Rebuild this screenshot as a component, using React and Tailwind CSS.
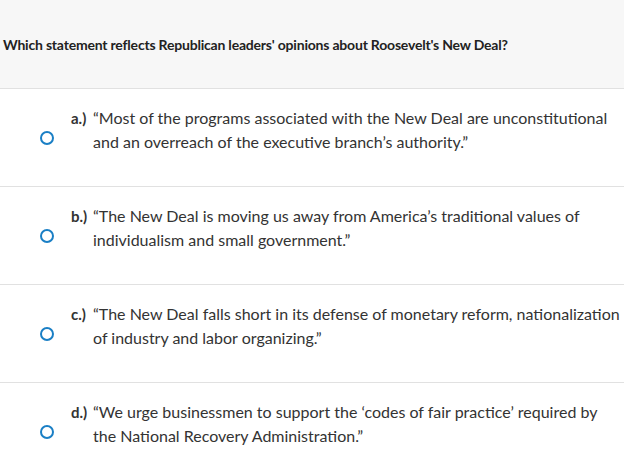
export default function App() {
  const options = [
    {
      label: "a.)",
      text: "“Most of the programs associated with the New Deal are unconstitutional and an overreach of the executive branch’s authority.”",
    },
    {
      label: "b.)",
      text: "“The New Deal is moving us away from America’s traditional values of individualism and small government.”",
    },
    {
      label: "c.)",
      text: "“The New Deal falls short in its defense of monetary reform, nationalization of industry and labor organizing.”",
    },
    {
      label: "d.)",
      text: "“We urge businessmen to support the ‘codes of fair practice’ required by the National Recovery Administration.”",
    },
  ];

  return (
    <div className="w-[624px] h-[473px] overflow-hidden bg-white font-['Lato',sans-serif] text-[#333]">
      <div className="h-[89px] bg-[#f7f7f7] border-b border-[#e1e1e1] flex items-center pl-[3px]">
        <h1 className="text-[14px] tracking-[-0.2px] font-bold text-[#222]">
          Which statement reflects Republican leaders' opinions about Roosevelt's New Deal?
        </h1>
      </div>

      {options.map((opt) => (
        <div
          key={opt.label}
          className="h-[98px] border-b border-[#e1e1e1] flex items-center"
        >
          <div className="w-[71px] pl-[40px]">
            <span className="block w-[14px] h-[14px] rounded-full border-2 border-[#1a7fc5]"></span>
          </div>
          <div className="flex mb-[15px] text-[16px] leading-[24px]">
            <span className="w-[22px] shrink-0 font-bold text-[15px]">{opt.label}</span>
            <span className="w-[528px]">{opt.text}</span>
          </div>
        </div>
      ))}
    </div>
  );
}
